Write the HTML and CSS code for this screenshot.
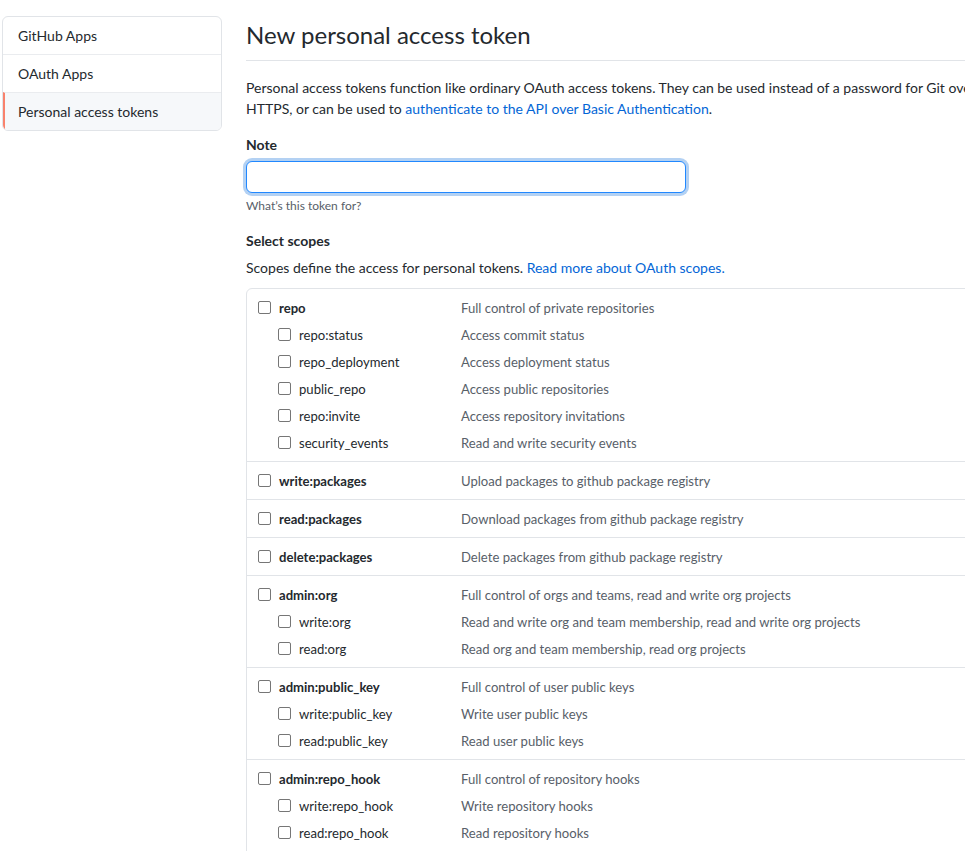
FILE: index.html
```html
<!DOCTYPE html>
<html>
<head>
<meta charset="utf-8">
<link rel="stylesheet" href="styles.css">
</head>
<body>
<div class="layout">
  <nav class="menu">
    <a class="menu-item">GitHub Apps</a>
    <a class="menu-item">OAuth Apps</a>
    <a class="menu-item selected">Personal access tokens</a>
  </nav>
  <main class="main">
    <div class="subhead"><h2 class="subhead-title">New personal access token</h2></div>
    <p class="intro">Personal access tokens function like ordinary OAuth access tokens. They can be used instead of a password for Git over HTTPS, or can be used to <a class="link">authenticate to the API over Basic Authentication</a>.</p>
    <div class="form-group">
      <label class="label">Note</label>
      <input class="input" type="text">
      <p class="note">What’s this token for?</p>
    </div>
    <div class="form-group">
      <label class="label">Select scopes</label>
      <p class="scope-desc">Scopes define the access for personal tokens. <a class="link">Read more about OAuth scopes.</a></p>
      <div class="scopes">
        <div class="group">
          <div class="row top"><span class="cb"></span><span class="name">repo</span><span class="desc">Full control of private repositories</span></div>
          <div class="row sub"><span class="cb"></span><span class="name">repo:status</span><span class="desc">Access commit status</span></div>
          <div class="row sub"><span class="cb"></span><span class="name">repo_deployment</span><span class="desc">Access deployment status</span></div>
          <div class="row sub"><span class="cb"></span><span class="name">public_repo</span><span class="desc">Access public repositories</span></div>
          <div class="row sub"><span class="cb"></span><span class="name">repo:invite</span><span class="desc">Access repository invitations</span></div>
          <div class="row sub"><span class="cb"></span><span class="name">security_events</span><span class="desc">Read and write security events</span></div>
        </div>
        <div class="group">
          <div class="row top"><span class="cb"></span><span class="name">write:packages</span><span class="desc">Upload packages to github package registry</span></div>
        </div>
        <div class="group">
          <div class="row top"><span class="cb"></span><span class="name">read:packages</span><span class="desc">Download packages from github package registry</span></div>
        </div>
        <div class="group">
          <div class="row top"><span class="cb"></span><span class="name">delete:packages</span><span class="desc">Delete packages from github package registry</span></div>
        </div>
        <div class="group">
          <div class="row top"><span class="cb"></span><span class="name">admin:org</span><span class="desc">Full control of orgs and teams, read and write org projects</span></div>
          <div class="row sub"><span class="cb"></span><span class="name">write:org</span><span class="desc">Read and write org and team membership, read and write org projects</span></div>
          <div class="row sub"><span class="cb"></span><span class="name">read:org</span><span class="desc">Read org and team membership, read org projects</span></div>
        </div>
        <div class="group">
          <div class="row top"><span class="cb"></span><span class="name">admin:public_key</span><span class="desc">Full control of user public keys</span></div>
          <div class="row sub"><span class="cb"></span><span class="name">write:public_key</span><span class="desc">Write user public keys</span></div>
          <div class="row sub"><span class="cb"></span><span class="name">read:public_key</span><span class="desc">Read user public keys</span></div>
        </div>
        <div class="group">
          <div class="row top"><span class="cb"></span><span class="name">admin:repo_hook</span><span class="desc">Full control of repository hooks</span></div>
          <div class="row sub"><span class="cb"></span><span class="name">write:repo_hook</span><span class="desc">Write repository hooks</span></div>
          <div class="row sub"><span class="cb"></span><span class="name">read:repo_hook</span><span class="desc">Read repository hooks</span></div>
        </div>
      </div>
    </div>
  </main>
</div>
</body>
</html>
```
FILE: styles.css
```css
html, body {
  margin: 0;
  padding: 0;
  overflow: hidden;
  background: #fff;
}
body {
  font-family: Lato, "Noto Sans", sans-serif;
  font-size: 14px;
  line-height: 21px;
  color: #24292e;
}
.layout {
  display: flex;
  align-items: flex-start;
  padding: 16px 0 0 2px;
  gap: 24px;
  width: 1100px;
}
.menu {
  width: 218px;
  flex: none;
  border: 1px solid #e1e4e8;
  border-radius: 6px;
  overflow: hidden;
  display: flex;
  flex-direction: column;
}
.menu-item {
  display: block;
  padding: 8px 16px 8px 15px;
  line-height: 21px;
  border-top: 1px solid #eaecef;
  color: #24292e;
}
.menu-item:first-child {
  border-top: 0;
}
.menu-item.selected {
  background: #f6f8fa;
  border-left: 2px solid #f9826c;
  padding-left: 13px;
}
.main {
  width: 760px;
  flex: none;
}
.subhead {
  border-bottom: 1px solid #e1e4e8;
  padding-bottom: 7px;
  margin-bottom: 16px;
}
.subhead-title {
  margin: 0;
  padding-top: 1px;
  font-size: 24px;
  font-weight: 400;
  line-height: 36px;
}
.intro {
  margin: 0 0 15px;
}
.link {
  color: #0366d6;
}
.form-group {
  margin-bottom: 15px;
}
.label {
  display: block;
  font-weight: 700;
  margin-bottom: 6px;
}
.input {
  display: block;
  box-sizing: border-box;
  width: 440px;
  height: 32px;
  margin: 0;
  padding: 5px 12px;
  border: 1px solid #2188ff;
  border-radius: 6px;
  box-shadow: 0 0 0 3px rgba(3, 102, 214, 0.3);
  outline: none;
  font: inherit;
}
.note {
  margin: 4px 0 0;
  font-size: 12px;
  line-height: 18px;
  color: #586069;
}
.scope-desc {
  margin: 0 0 10px;
}
.scopes {
  border: 1px solid #e1e4e8;
  border-radius: 6px 0 0 0;
  font-size: 13.1px;
}
.group {
  padding: 6px 0 4px;
  border-top: 1px solid #e1e4e8;
}
.group:first-child {
  border-top: 0;
}
.row {
  display: flex;
  align-items: center;
  height: 27px;
  padding-left: 11px;
}
.row.sub {
  padding-left: 31px;
}
.cb {
  flex: none;
  width: 11px;
  height: 11px;
  border: 1px solid #767676;
  border-radius: 2px;
  margin-right: 8px;
  background: #fff;
  position: relative;
  top: -1px;
}
.name {
  flex: none;
  color: #24292e;
}
.row.top .name {
  font-weight: 700;
  width: 182px;
}
.row.sub .name {
  width: 162px;
}
.desc {
  color: #586069;
  white-space: nowrap;
}
```
